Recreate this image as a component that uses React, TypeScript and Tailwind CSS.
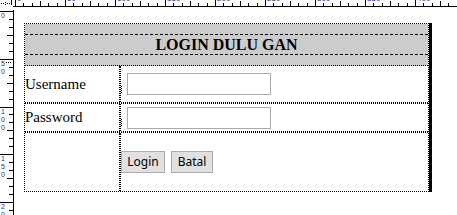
import React from "react";

function TopRuler() {
  const ticks: React.ReactNode[] = [];
  for (let k = 0; k < 60; k++) {
    const x = Math.round(15 + (k * 50) / 6);
    if (x > 457) break;
    const m = k % 6;
    const y = m === 0 ? 0 : m === 3 ? 1 : 3;
    ticks.push(<rect key={"t" + k} x={x} y={y} width={1} height={6 - y} fill="#000" />);
  }
  const labels: React.ReactNode[] = [];
  for (let i = 0; i < 9; i++) {
    labels.push(
      <text key={"l" + i} x={15 + 50 * i + 2} y={1.4} fontSize={8} fontFamily="Liberation Sans, sans-serif" fill="#1b2f8a">
        {String(i * 50)}
      </text>
    );
  }
  return (
    <svg width={457} height={8} viewBox="0 0 457 8" shapeRendering="crispEdges" className="block shrink-0">
      <rect x={13} y={6} width={444} height={1} fill="#000" />
      {ticks}
      {labels}
      <rect x={1} y={3} width={1} height={1} fill="#000" />
      <rect x={3} y={3} width={1} height={1} fill="#000" />
      <rect x={5} y={2} width={1} height={1} fill="#000" />
      <rect x={5} y={4} width={1} height={1} fill="#000" />
      <rect x={7} y={3} width={1} height={1} fill="#000" />
      <rect x={9} y={3} width={1} height={1} fill="#000" />
      <rect x={11} y={0} width={1} height={5} fill="#000" />
    </svg>
  );
}

function LeftRuler() {
  const off = 8;
  const ticks: React.ReactNode[] = [];
  const step = 47.75 / 6;
  for (let k = 0; k < 40; k++) {
    const y = Math.round(11 + k * step) - off;
    if (y > 215) break;
    const m = k % 6;
    const x = m === 0 ? 0 : m === 3 ? 7 : 9;
    ticks.push(<rect key={"t" + k} x={x} y={y} width={13 - x} height={1} fill="#000" />);
  }
  const labels: React.ReactNode[] = [];
  for (let i = 0; i < 5; i++) {
    const base = Math.round(11 + i * 47.75) - off;
    const digits = String(i * 50).split("");
    digits.forEach((d, j) => {
      labels.push(
        <text key={"l" + i + "-" + j} x={1} y={base + 7 + j * 8} fontSize={7} fontFamily="Liberation Sans, sans-serif" fill="#1b2f8a">
          {d}
        </text>
      );
    });
  }
  return (
    <svg width={14} height={207} viewBox="0 0 14 207" shapeRendering="crispEdges" className="block shrink-0">
      <rect x={13} y={2} width={1} height={205} fill="#000" />
      {ticks}
      {labels}
      {[6, 8, 10].map((x) => (
        <rect key={"d" + x} x={x} y={62 - off} width={1} height={1} fill="#000" />
      ))}
    </svg>
  );
}

export default function App() {
  return (
    <div className="w-[457px] h-[215px] bg-white overflow-hidden flex flex-col font-['Liberation_Serif',serif] text-black">
      <TopRuler />
      <div className="flex flex-1 min-h-0">
        <LeftRuler />
        <div className="flex-1 pl-[10px] pt-[15px]">
          <div className="flex w-[408px] border-r-[3px] border-solid border-black">
            <div className="w-[405px] border border-dotted border-black flex flex-col">
              <div className="bg-[#cccccc] pt-[10px] pb-[10px] border-b border-dotted border-black">
                <div className="h-[21px] border-y border-dashed border-black flex items-center justify-center text-[16px] leading-[19px] font-bold">
                  LOGIN DULU GAN
                </div>
              </div>
              <div className="flex h-[37px] border-b border-dotted border-black">
                <div className="w-[95px] border-r border-dotted border-black flex items-center text-[15px] leading-[17px]">
                  Username
                </div>
                <div className="flex-1 border-l border-dotted border-black flex items-center">
                  <span className="w-[1px] h-[7px] border-l border-dotted border-black mt-[10px]" />
                  <input type="text" className="ml-[5px] w-[144px] h-[22px] border border-solid border-[#ababab] bg-white outline-none" />
                </div>
              </div>
              <div className="flex h-[29px] border-y border-dotted border-black">
                <div className="w-[95px] border-r border-dotted border-black flex items-center text-[15px] leading-[17px]">
                  Password
                </div>
                <div className="flex-1 border-l border-dotted border-black flex items-center">
                  <span className="w-[1px] h-[7px] border-l border-dotted border-black mt-[9px]" />
                  <input type="password" className="ml-[5px] w-[144px] h-[22px] border border-solid border-[#ababab] bg-white outline-none" />
                </div>
              </div>
              <div className="flex h-[59px] border-t border-dotted border-black">
                <div className="w-[95px] border-r border-dotted border-black" />
                <div className="flex-1 border-l border-dotted border-black flex items-center gap-[6px] font-['Noto_Sans',sans-serif]">
                  <button className="w-[44px] h-[22px] bg-[#e1e1e1] border border-solid border-[#adadad] text-[12px] leading-[20px] text-black">
                    Login
                  </button>
                  <button className="w-[42px] h-[22px] bg-[#e1e1e1] border border-solid border-[#adadad] text-[12px] leading-[20px] text-black">
                    Batal
                  </button>
                </div>
              </div>
            </div>
          </div>
        </div>
      </div>
    </div>
  );
}
